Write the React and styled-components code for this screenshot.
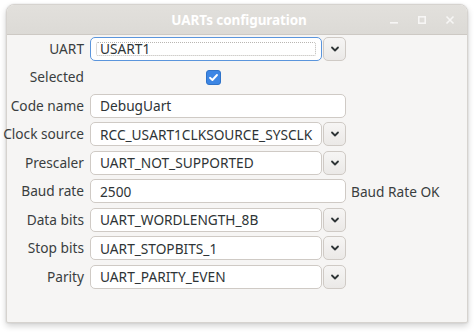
import React from "react";
import styled, { createGlobalStyle } from "styled-components";

const Global = createGlobalStyle`
  html, body { margin: 0; padding: 0; background: #ffffff; }
  body { font-family: "Noto Sans", "DejaVu Sans", sans-serif; font-size: 13.7px; color: #2e3436; }
  * { box-sizing: border-box; }
`;

const Page = styled.div`
  width: 474px;
  height: 332px;
  padding: 4px 6px 0 6px;
  overflow: hidden;
`;

const Window = styled.div`
  width: 462px;
  height: 319px;
  background: #f6f5f4;
  border: 1px solid #d6d3cf;
  border-radius: 8px 8px 2px 2px;
  box-shadow: 0 3px 6px rgba(0, 0, 0, 0.18), 0 0 0 1px rgba(0, 0, 0, 0.03);
  display: flex;
  flex-direction: column;
`;

const TitleBar = styled.div`
  height: 30px;
  flex: none;
  position: relative;
  display: flex;
  align-items: center;
  justify-content: center;
  background: linear-gradient(#e2e0dc, #dcdad6);
  border-bottom: 1px solid #cdc9c4;
  border-radius: 7px 7px 0 0;
`;

const Title = styled.div`
  font-weight: 700;
  font-size: 13.5px;
  color: #ffffff;
  letter-spacing: -0.1px;
  margin-left: 4px;
`;

const Controls = styled.div`
  position: absolute;
  right: 9px;
  top: 0;
  height: 100%;
  display: flex;
  align-items: center;
  gap: 12px;
`;

const CtlBtn = styled.div`
  width: 16px;
  height: 16px;
  display: flex;
  align-items: center;
  justify-content: center;
`;

const Body = styled.div`
  flex: 1;
  padding-top: 1.5px;
  display: grid;
  grid-template-columns: 77px 256px auto;
  grid-auto-rows: 24px;
  column-gap: 6px;
  row-gap: 4.5px;
  align-content: start;
`;

const Label = styled.div`
  justify-self: end;
  align-self: center;
  white-space: nowrap;
  color: #3a3e3f;
  line-height: 18px;
`;

const Combo = styled.div`
  display: flex;
  gap: 1px;
`;

const Entry = styled.div`
  flex: 1;
  height: 24px;
  position: relative;
  background: #ffffff;
  border: 1px solid ${(p) => (p.$focused ? "#5b95dc" : "#cfcac5")};
  border-radius: 5px;
  padding-left: 9px;
  display: flex;
  align-items: center;
  white-space: nowrap;
  overflow: hidden;
  color: #2e3436;
`;

const FocusRing = styled.div`
  position: absolute;
  left: 5px;
  right: 5px;
  top: 4px;
  bottom: 4px;
  border: 1px dotted #b9b6b2;
  border-radius: 2px;
  pointer-events: none;
`;

const DropBtn = styled.div`
  width: 23px;
  height: 24px;
  flex: none;
  border: 1px solid #cfcac5;
  border-radius: 5px;
  background: linear-gradient(#f6f5f4, #ebe9e7);
  display: flex;
  align-items: center;
  justify-content: center;
`;

const CheckCell = styled.div`
  display: flex;
  align-items: center;
  padding-left: 116px;
`;

const CheckBox = styled.div`
  width: 15px;
  height: 15px;
  border-radius: 3px;
  background: #3d86e4;
  border: 1px solid #2f73c9;
  display: flex;
  align-items: center;
  justify-content: center;
`;

const Extra = styled.div`
  align-self: center;
  white-space: nowrap;
  color: #3a3e3f;
  margin-left: -1px;
`;

const Chevron = () => (
  <svg width="10" height="8" viewBox="0 0 10 8">
    <path d="M2 2.5 L5 5.5 L8 2.5" fill="none" stroke="#2e3436" strokeWidth="1.8" strokeLinecap="round" strokeLinejoin="round" />
  </svg>
);

const ComboField = ({ value, focused }) => (
  <Combo>
    <Entry $focused={focused}>
      {focused && <FocusRing />}
      {value}
    </Entry>
    <DropBtn>
      <Chevron />
    </DropBtn>
  </Combo>
);

const rows = [
  { label: "UART", type: "combo", value: "USART1", focused: true },
  { label: "Selected", type: "check" },
  { label: "Code name", type: "entry", value: "DebugUart" },
  { label: "Clock source", type: "combo", value: "RCC_USART1CLKSOURCE_SYSCLK" },
  { label: "Prescaler", type: "combo", value: "UART_NOT_SUPPORTED" },
  { label: "Baud rate", type: "entry", value: "2500", extra: "Baud Rate OK" },
  { label: "Data bits", type: "combo", value: "UART_WORDLENGTH_8B" },
  { label: "Stop bits", type: "combo", value: "UART_STOPBITS_1" },
  { label: "Parity", type: "combo", value: "UART_PARITY_EVEN" },
];

export default function App() {
  return (
    <>
      <Global />
      <Page>
        <Window>
          <TitleBar>
            <Title>UARTs configuration</Title>
            <Controls>
              <CtlBtn>
                <svg width="10" height="10" viewBox="0 0 10 10">
                  <rect x="1" y="7" width="8" height="1.6" fill="#f7f6f5" />
                </svg>
              </CtlBtn>
              <CtlBtn>
                <svg width="10" height="10" viewBox="0 0 10 10">
                  <rect x="1.8" y="1.8" width="6.4" height="6.4" fill="none" stroke="#f7f6f5" strokeWidth="1.6" />
                </svg>
              </CtlBtn>
              <CtlBtn>
                <svg width="10" height="10" viewBox="0 0 10 10">
                  <path d="M1.5 1.5 L8.5 8.5 M8.5 1.5 L1.5 8.5" stroke="#f7f6f5" strokeWidth="1.6" />
                </svg>
              </CtlBtn>
            </Controls>
          </TitleBar>
          <Body>
            {rows.map((r) => (
              <React.Fragment key={r.label}>
                <Label>{r.label}</Label>
                {r.type === "combo" && <ComboField value={r.value} focused={r.focused} />}
                {r.type === "entry" && <Entry>{r.value}</Entry>}
                {r.type === "check" && (
                  <CheckCell>
                    <CheckBox>
                      <svg width="11" height="11" viewBox="0 0 11 11">
                        <path d="M2 5.8 L4.4 8 L9 3" fill="none" stroke="#ffffff" strokeWidth="1.9" strokeLinecap="round" strokeLinejoin="round" />
                      </svg>
                    </CheckBox>
                  </CheckCell>
                )}
                <Extra>{r.extra || ""}</Extra>
              </React.Fragment>
            ))}
          </Body>
        </Window>
      </Page>
    </>
  );
}
